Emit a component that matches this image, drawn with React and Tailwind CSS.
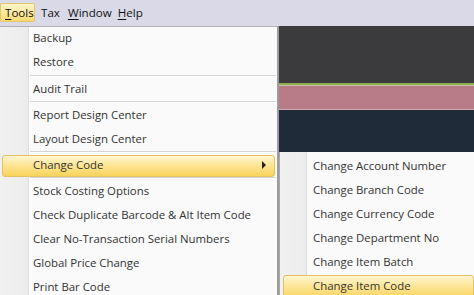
import React from "react";

const font = { fontFamily: '"Segoe UI", "Open Sans", "Noto Sans", sans-serif' };

function Item({ label, hl, arrow }) {
  if (hl) {
    return (
      <div className="relative h-[24px] flex items-center">
        <div className="absolute left-[2px] right-[2px] top-[2px] bottom-[0px] rounded-[3px] border border-[#e3c160] bg-gradient-to-b from-[#fff6d2] via-[#fde48f] to-[#f8d25a]" />
        <span className="relative pl-[33px] text-[#333]">{label}</span>
        {arrow && (
          <span className="absolute right-[11px] top-[8px] w-0 h-0 border-y-[4px] border-y-transparent border-l-[4px] border-l-[#222]" />
        )}
      </div>
    );
  }
  return (
    <div className="h-[24px] flex items-center pl-[33px] text-[#333]">{label}</div>
  );
}

function Sep() {
  return (
    <div className="h-[2px] ml-[30px] mr-[1px] flex flex-col">
      <div className="h-px bg-[#d5d5d5]" />
      <div className="h-px bg-white" />
    </div>
  );
}

function SubItem({ label, hl }) {
  if (hl) {
    return (
      <div className="relative h-[24px] flex items-center">
        <div className="absolute left-[3px] right-0 top-[1px] bottom-[-2px] rounded-[3px] border border-[#e3c160] bg-gradient-to-b from-[#fff6d2] via-[#fde48f] to-[#f8d25a]" />
        <span className="relative pl-[33px] text-[#333]">{label}</span>
      </div>
    );
  }
  return <div className="h-[24px] flex items-center pl-[33px] text-[#333]">{label}</div>;
}

export default function App() {
  return (
    <div
      className="w-[474px] h-[295px] overflow-hidden flex flex-col bg-[#d9d9e7] text-[11.4px] leading-none"
      style={font}
    >
      <div className="h-[26px] flex items-start pt-[3px] text-[#111] shrink-0 text-[12px]">
        <div className="h-[19px] w-[35px] flex items-center pl-[4px] rounded-[2px] border border-[#e6c46a] bg-gradient-to-b from-[#fff4c8] via-[#fde9a0] to-[#fbd970]">
          <span className="text-[11.6px]"><span className="underline underline-offset-2">T</span>ools</span>
        </div>
        <div className="h-[19px] flex items-center ml-[6px] text-[11.6px]">Tax</div>
        <div className="h-[19px] flex items-center ml-[8px] text-[11.6px]">
          <span><span className="underline underline-offset-2">W</span>indow</span>
        </div>
        <div className="h-[19px] flex items-center ml-[6px] text-[11.6px]">
          <span><span className="underline underline-offset-2">H</span>elp</span>
        </div>
      </div>
      <div className="flex flex-1 min-h-0">
        <div className="w-[279px] shrink-0 relative bg-[#fafafa] border-t border-r-2 border-[#b0b0b0] border-r-[#9c9c9c] flex flex-col">
          <div className="absolute left-0 top-0 bottom-0 w-[29px] bg-gradient-to-r from-[#f1f1f1] to-[#ececec] border-r border-[#dcdcdc]">
            <div className="absolute right-[-2px] top-0 bottom-0 w-px bg-white" />
          </div>
          <div className="relative flex flex-col -mt-px">
            <Item label="Backup" />
            <Item label="Restore" />
            <div className="h-[3px] flex flex-col justify-center"><Sep /></div>
            <Item label="Audit Trail" />
            <Sep />
            <Item label="Report Design Center" />
            <Item label="Layout Design Center" />
            <Sep />
            <Item label="Change Code" hl arrow />
            <Sep />
            <Item label="Stock Costing Options" />
            <Item label="Check Duplicate Barcode &amp; Alt Item Code" />
            <Item label="Clear No-Transaction Serial Numbers" />
            <Item label="Global Price Change" />
            <Item label="Print Bar Code" />
          </div>
        </div>
        <div className="flex-1 flex flex-col min-w-0">
          <div className="h-[57px] bg-[#3b3b3d] shrink-0" />
          <div className="h-[2px] bg-[#8fae52] shrink-0" />
          <div className="h-px bg-[#c9c0a8] shrink-0" />
          <div className="h-[23px] bg-[#b87b88] shrink-0" />
          <div className="h-px bg-[#cfa7b0] shrink-0" />
          <div className="h-[42px] bg-[#1f2b39] shrink-0" />
          <div className="flex-1 bg-[#fafafa] relative border-l border-[#a8a8a8]">
            <div className="absolute left-0 top-0 bottom-0 w-[27px] bg-gradient-to-r from-[#f1f1f1] to-[#ececec] border-r border-[#dcdcdc]" />
            <div className="relative flex flex-col pt-[2px]">
              <SubItem label="Change Account Number" />
              <SubItem label="Change Branch Code" />
              <SubItem label="Change Currency Code" />
              <SubItem label="Change Department No" />
              <SubItem label="Change Item Batch" />
              <SubItem label="Change Item Code" hl />
            </div>
          </div>
        </div>
      </div>
    </div>
  );
}
